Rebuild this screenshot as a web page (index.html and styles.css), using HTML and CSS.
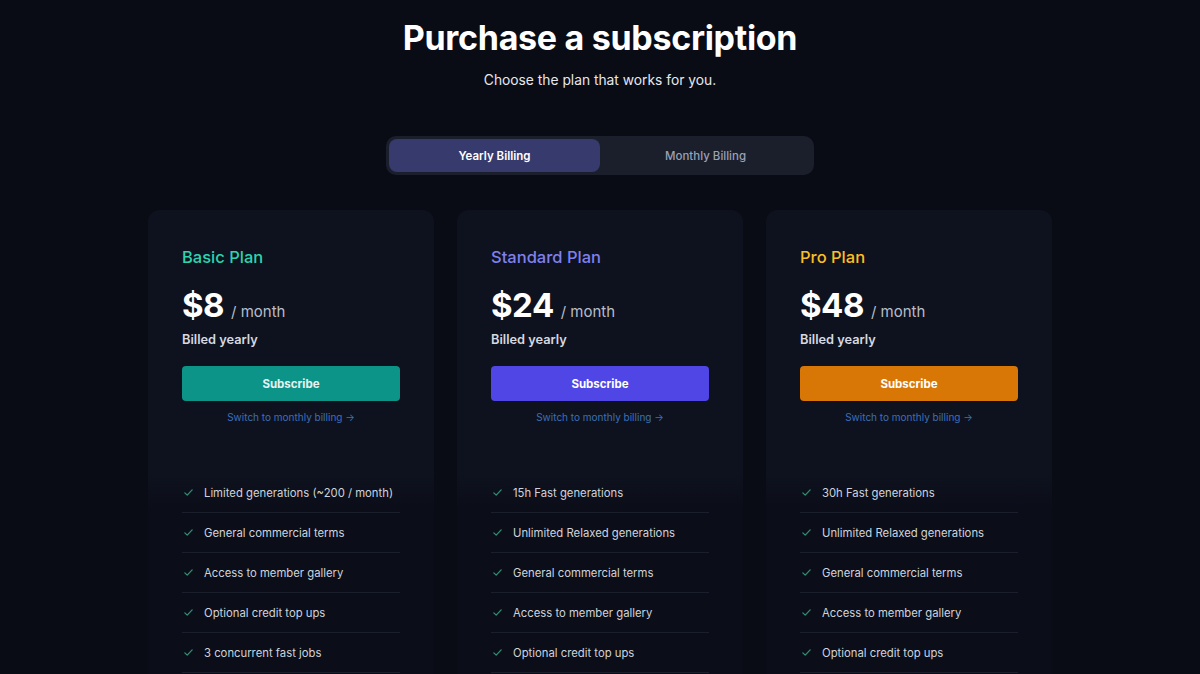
FILE: index.html
```html
<!DOCTYPE html>
<html lang="en">
<head>
<meta charset="utf-8">
<title>Purchase a subscription</title>
<link rel="stylesheet" href="styles.css">
</head>
<body>
<main class="page">
  <header class="header">
    <h1 class="title">Purchase a subscription</h1>
    <p class="subtitle">Choose the plan that works for you.</p>
  </header>

  <div class="toggle">
    <button class="toggle-btn is-active">Yearly Billing</button>
    <button class="toggle-btn">Monthly Billing</button>
  </div>

  <section class="plans">
    <article class="card">
      <div class="card-top">
        <h2 class="plan-name plan-basic">Basic Plan</h2>
        <div class="price"><span class="amount">$8</span><span class="per">/ month</span></div>
        <div class="billed">Billed yearly</div>
        <button class="subscribe btn-basic">Subscribe</button>
        <a class="switch" href="#">Switch to monthly billing →</a>
      </div>
      <ul class="features">
        <li><svg class="check" viewBox="0 0 12 12"><path d="M2 6.4l2.6 2.5L10 3.2"/></svg>Limited generations (~200 / month)</li>
        <li><svg class="check" viewBox="0 0 12 12"><path d="M2 6.4l2.6 2.5L10 3.2"/></svg>General commercial terms</li>
        <li><svg class="check" viewBox="0 0 12 12"><path d="M2 6.4l2.6 2.5L10 3.2"/></svg>Access to member gallery</li>
        <li><svg class="check" viewBox="0 0 12 12"><path d="M2 6.4l2.6 2.5L10 3.2"/></svg>Optional credit top ups</li>
        <li><svg class="check" viewBox="0 0 12 12"><path d="M2 6.4l2.6 2.5L10 3.2"/></svg>3 concurrent fast jobs</li>
      </ul>
    </article>

    <article class="card">
      <div class="card-top">
        <h2 class="plan-name plan-standard">Standard Plan</h2>
        <div class="price"><span class="amount">$24</span><span class="per">/ month</span></div>
        <div class="billed">Billed yearly</div>
        <button class="subscribe btn-standard">Subscribe</button>
        <a class="switch" href="#">Switch to monthly billing →</a>
      </div>
      <ul class="features">
        <li><svg class="check" viewBox="0 0 12 12"><path d="M2 6.4l2.6 2.5L10 3.2"/></svg>15h Fast generations</li>
        <li><svg class="check" viewBox="0 0 12 12"><path d="M2 6.4l2.6 2.5L10 3.2"/></svg>Unlimited Relaxed generations</li>
        <li><svg class="check" viewBox="0 0 12 12"><path d="M2 6.4l2.6 2.5L10 3.2"/></svg>General commercial terms</li>
        <li><svg class="check" viewBox="0 0 12 12"><path d="M2 6.4l2.6 2.5L10 3.2"/></svg>Access to member gallery</li>
        <li><svg class="check" viewBox="0 0 12 12"><path d="M2 6.4l2.6 2.5L10 3.2"/></svg>Optional credit top ups</li>
      </ul>
    </article>

    <article class="card">
      <div class="card-top">
        <h2 class="plan-name plan-pro">Pro Plan</h2>
        <div class="price"><span class="amount">$48</span><span class="per">/ month</span></div>
        <div class="billed">Billed yearly</div>
        <button class="subscribe btn-pro">Subscribe</button>
        <a class="switch" href="#">Switch to monthly billing →</a>
      </div>
      <ul class="features">
        <li><svg class="check" viewBox="0 0 12 12"><path d="M2 6.4l2.6 2.5L10 3.2"/></svg>30h Fast generations</li>
        <li><svg class="check" viewBox="0 0 12 12"><path d="M2 6.4l2.6 2.5L10 3.2"/></svg>Unlimited Relaxed generations</li>
        <li><svg class="check" viewBox="0 0 12 12"><path d="M2 6.4l2.6 2.5L10 3.2"/></svg>General commercial terms</li>
        <li><svg class="check" viewBox="0 0 12 12"><path d="M2 6.4l2.6 2.5L10 3.2"/></svg>Access to member gallery</li>
        <li><svg class="check" viewBox="0 0 12 12"><path d="M2 6.4l2.6 2.5L10 3.2"/></svg>Optional credit top ups</li>
      </ul>
    </article>
  </section>
</main>
</body>
</html>
```

FILE: styles.css
```css
* { box-sizing: border-box; }

html, body {
  margin: 0;
  padding: 0;
  background: #090b15;
  color: #ffffff;
  font-family: "Inter", "Noto Sans", sans-serif;
  height: 674px;
  overflow: hidden;
}

.page {
  display: flex;
  flex-direction: column;
  align-items: center;
  padding-top: 14px;
}

.header {
  text-align: center;
}

.title {
  margin: 0;
  font-size: 34px;
  line-height: 48px;
  font-weight: 700;
  letter-spacing: -0.3px;
  color: #ffffff;
}

.subtitle {
  margin: 8px 0 0;
  font-size: 13.8px;
  line-height: 20px;
  color: #e6e8ee;
}

.toggle {
  margin-top: 46px;
  width: 428px;
  height: 39px;
  padding: 3px;
  display: grid;
  grid-template-columns: 1fr 1fr;
  background: #1b1e2b;
  border-radius: 10px;
}

.toggle-btn {
  border: 0;
  background: transparent;
  color: #9aa1b6;
  font-family: inherit;
  font-size: 11.5px;
  font-weight: 500;
  border-radius: 8px;
}

.toggle-btn.is-active {
  background: #363a6c;
  color: #ffffff;
  font-weight: 600;
}

.plans {
  margin-top: 35px;
  display: grid;
  grid-template-columns: repeat(3, 286px);
  gap: 23px;
}

.card {
  border-radius: 12px;
  background: linear-gradient(180deg, #0e121e 0%, #0e121e 55%, #0b0e19 62%, #0b0e19 100%);
  overflow: hidden;
  height: 480px;
}

.card-top {
  padding: 36px 34px 0;
  display: flex;
  flex-direction: column;
}

.plan-name {
  margin: 0;
  font-size: 16.5px;
  line-height: 22px;
  font-weight: 500;
}

.plan-basic { color: #2dd4b0; }
.plan-standard { color: #7f80f0; }
.plan-pro { color: #fbbf24; }

.price {
  margin-top: 17px;
  display: flex;
  align-items: baseline;
  height: 40px;
}

.amount {
  font-size: 33px;
  line-height: 40px;
  font-weight: 700;
  color: #ffffff;
  letter-spacing: -0.5px;
}

.per {
  margin-left: 7px;
  font-size: 15px;
  color: #b8bdc9;
}

.billed {
  margin-top: 6px;
  font-size: 12.8px;
  line-height: 18px;
  font-weight: 600;
  color: #d6d9e0;
}

.subscribe {
  margin-top: 17px;
  height: 35px;
  border: 0;
  border-radius: 4px;
  font-family: inherit;
  font-size: 11.5px;
  font-weight: 700;
  color: #ffffff;
}

.btn-basic { background: #0d9488; color: #e6f5f2; }
.btn-standard { background: #4f46e5; }
.btn-pro { background: #d97706; }

.switch {
  margin-top: 9px;
  text-align: center;
  font-size: 10px;
  line-height: 14px;
  color: #3d6fb8;
  text-decoration: none;
}

.features {
  list-style: none;
  margin: 49px 34px 0;
  padding: 0;
}

.features li {
  height: 40px;
  display: flex;
  align-items: center;
  border-bottom: 1px solid #1b1f2d;
  font-size: 11.3px;
  color: #cfd3dc;
}

.check {
  width: 11px;
  height: 11px;
  margin: 0 10px 0 1px;
  fill: none;
  stroke: #2f8f72;
  stroke-width: 1.4;
  stroke-linecap: round;
  stroke-linejoin: round;
}
```
